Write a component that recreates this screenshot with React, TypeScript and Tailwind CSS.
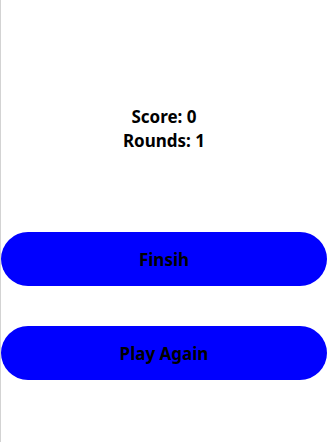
export default function App() {
  const score = 0;
  const rounds = 1;

  return (
    <div
      className="min-h-[442px] border-l border-[#d3d3d3] bg-white text-black"
      style={{ fontFamily: '"Noto Sans", "Open Sans", sans-serif' }}
    >
      <div className="pt-[105px] text-center text-[17px] font-bold leading-[24px]">
        <p>Score: {score}</p>
        <p>Rounds: {rounds}</p>
      </div>

      <div className="mt-[79px] flex flex-col gap-[40px]">
        <button className="h-[54px] w-full rounded-full bg-[#0000ff] pt-[2px] text-[17px] font-bold text-black">
          Finsih
        </button>
        <button className="h-[54px] w-full rounded-full bg-[#0000ff] pt-[2px] text-[17px] font-bold text-black">
          Play Again
        </button>
      </div>
    </div>
  );
}
